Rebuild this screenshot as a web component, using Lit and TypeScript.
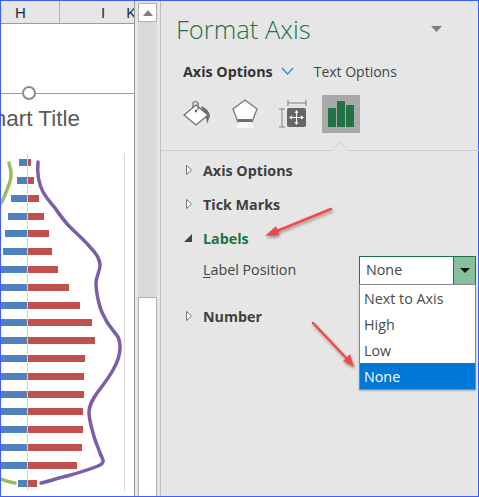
import { LitElement, html, css, svg } from "lit";
import { customElement } from "lit/decorators.js";

const ROWS = [159,177,195,213,230,248,266,284,302,319,337,355,373,391,408,426,444,462,480];
const BLUE = [19,17,11,8,5,3,1,1,1,1,1,1,1,1,1,1,1,1,18];
const RED = [31,34,39,44,49,52,58,69,80,92,95,85,84,84,83,83,82,77,37];

@customElement("app-root")
export class AppRoot extends LitElement {
  static styles = css`
    :host { display: block; width: 479px; height: 497px; position: relative; overflow: hidden; font-family: "Open Sans", "Liberation Sans", sans-serif; }
    * { box-sizing: border-box; }
    .frame { width: 479px; height: 497px; border: 1px solid #3f5cff; display: flex; background: #e6e6e6; }
    .sheet { width: 134px; flex: none; display: flex; flex-direction: column; border-right: 1px solid #9a9a9a; background: #fff; }
    .heads { height: 23px; flex: none; background: #e6e6e6; border-bottom: 1px solid #9a9a9a; display: grid; grid-template-columns: 59px 1fr; font: 15px "Liberation Sans", sans-serif; color: #1c2a48; overflow: hidden; }
    .h { padding: 3px 0 0 14px; border-right: 1px solid #b4b4b4; }
    .ik { display: flex; padding: 3px 0 0 41px; gap: 21px; }
    .handle { height: 70px; flex: none; border-bottom: 1px solid #9a9a9a; position: relative; }
    .dot { position: absolute; left: 21px; top: 62px; width: 14px; height: 14px; border-radius: 50%; border: 2.5px solid #8c8c8c; background: #fff; z-index: 1; }
    .plot { flex: 1; display: block; width: 133px; }
    .scroll { width: 25px; flex: none; display: flex; flex-direction: column; padding: 2px 3px 0; background: #e6e6e6; }
    .up { width: 19px; height: 19px; flex: none; background: #fff; border: 1px solid #b0b0b0; display: grid; place-items: center; }
    .up svg { display: block; }
    .track { flex: 1; background: #d9d9d9; padding-top: 275px; }
    .thumb { height: 100%; background: #fff; border: 1px solid #b0b0b0; border-bottom: none; }
    .gut { width: 1px; background: #bdbdbd; flex: none; }
    .panel { flex: 1; min-width: 0; padding-left: 15px; display: flex; flex-direction: column; position: relative; color: #444; font-size: 14.3px; }
    .title { height: 55px; flex: none; display: flex; align-items: flex-start; justify-content: space-between; padding: 11px 36px 0 0; }
    h1 { margin: 0; font: 300 25.5px/34px "Open Sans", sans-serif; color: #217346; }
    .caret { margin-top: 14px; }
    .tabs { height: 30px; flex: none; display: flex; align-items: center; padding-left: 7px; }
    .tabs b { font-weight: 700; color: #333; }
    .tabs span { font-size: 14px; }
    .chev { margin: 0 20px 0 8px; }
    .icons { display: flex; align-items: center; height: 38px; gap: 10px; padding-left: 2px; margin-top: 9px; flex: none; }
    .ic { width: 38px; height: 38px; display: grid; place-items: center; flex: none; }
    .ic.sel { background: #a9a9a9; }
    .sep { height: 18px; flex: none; display: block; margin-left: -15px; }
    .sections { padding-top: 2px; display: flex; flex-direction: column; flex: 1; }
    .sec { height: 34px; flex: none; display: flex; align-items: center; gap: 11px; padding-left: 10px; font-weight: 700; color: #3f3f3f; }
    .sec svg { width: 6px; flex: none; }
    .sec .open { width: 8px; margin: 0 0 0 -2px; }
    .sec.lab { color: #217346; }
    .row { height: 30px; flex: none; display: flex; align-items: flex-start; justify-content: space-between; padding-left: 27px; margin: 1px 0 13px; }
    .row > span { line-height: 27px; }
    u { text-decoration: underline; text-underline-offset: 2px; }
    .combo { width: 117px; height: 29px; border: 1px solid #217346; background: #fff; display: flex; margin-right: 2px; }
    .combo span { flex: 1; padding-left: 6px; line-height: 26px; }
    .combo i { width: 22px; background: #86bf9b; border-left: 1px solid #217346; display: grid; place-items: center; }
    .menu { position: absolute; left: 198px; top: 283px; width: 117px; height: 106px; background: #fff; border: 1px solid #888; box-shadow: 0 1px 2px #0003; color: #4a4a4a; }
    .menu div { height: 26px; line-height: 27px; padding-left: 4px; }
    .menu .on { background: #0078d7; color: #fff; }
    .arrows { position: absolute; left: 0; top: 0; pointer-events: none; }
  `;

  private plot() {
    return html`<svg class="plot" viewBox="1 94 133 402" preserveAspectRatio="xMinYMin">
      <text x="80" y="126" text-anchor="end" font-family="Liberation Sans" font-size="22.5" fill="#595959">Chart Title</text>
      <line x1="27.5" y1="154" x2="27.5" y2="491" stroke="#cfd3d3"/>
      <line x1="124.5" y1="153" x2="124.5" y2="491" stroke="#d9d9d9"/>
      ${ROWS.map((y, i) => svg`<rect x=${BLUE[i]} y=${y} width=${27 - BLUE[i]} height="7" fill="#4f81bd"/><rect x="28" y=${y} width=${RED[i] - 28} height="7" fill="#c0504d"/>`)}
      <path d="M38 162C37 172 38 182 43 192C47 199 50 202 55 208C60 215 64 221 70 227C77 234 84 240 90 247C96 253 100 259 100 265C100 272 96 276 96 283C96 291 98 300 100 307C102 314 105 318 107 322C110 327 114 331 118 337C120 341 120 344 120 348C120 356 117 363 113 370C108 379 103 385 97 393C93 399 89 405 89 412C89 419 91 426 93 433C95 441 98 447 100 453C101 457 104 459 103 462C102 465 100 465 98 466C88 470 78 473 67 476C58 478 50 481 41 483" fill="none" stroke="#7b5ea7" stroke-width="3.5" stroke-linecap="round"/>
      <path d="M9 163C10 168 11 170 11 173C11 179 10 183 8 187C6 193 4 198 1 203M1 479C6 481 10 482 15 483" fill="none" stroke="#9bbb59" stroke-width="3.5" stroke-linecap="round"/>
    </svg>`;
  }

  render() {
    const closed = html`<svg height="10" viewBox="0 0 6 10"><path d="M.5 .5L5.500 5L.5 9.500Z" fill="#fff" stroke="#777"/></svg>`;
    return html`<div class="frame">
      <div class="sheet">
        <div class="heads"><div class="h">H</div><div class="ik"><span>I</span><span>K</span></div></div>
        <div class="handle"><div class="dot"></div></div>
        ${this.plot()}
      </div>
      <div class="scroll">
        <div class="up"><svg width="10" height="6"><path d="M0 6L5 0L10 6Z" fill="#7f7f7f"/></svg></div>
        <div class="track"><div class="thumb"></div></div>
      </div>
      <div class="gut"></div>
      <div class="panel">
        <div class="title"><h1>Format Axis</h1><svg class="caret" width="11" height="6"><path d="M0 0H11L5.5 6Z" fill="#7f7f7f"/></svg></div>
        <div class="tabs"><b>Axis Options</b>
          <svg class="chev" width="13" height="8" viewBox="0 0 13 8"><path d="M1 1L6.5 7L12 1" fill="none" stroke="#2e8fd6" stroke-width="1.4"/></svg>
          <span>Text Options</span></div>
        <div class="icons">
          <div class="ic"><svg width="30" height="30" viewBox="0 0 30 30">
            <path d="M19 7Q27 10 28 17L25 25Q25 19 21 14Z" fill="#6e6e6e"/>
            <path d="M14 6L26 16L14 26L2 16Z" fill="#fff" stroke="#6e6e6e" stroke-width="1.2"/>
            <path d="M11 9V4Q13.500 1 16 4V11" fill="none" stroke="#6e6e6e" stroke-width="1.2"/><circle cx="14" cy="12" r="1.4" fill="#6e6e6e"/></svg></div>
          <div class="ic"><svg width="30" height="32" viewBox="0 0 30 32">
            <path d="M15 2L27 11L22 24H8L3 11Z" fill="#fff" stroke="#7a7a7a" stroke-width="1.3"/>
            <rect x="8" y="21" width="14" height="3" fill="#6e6e6e"/><path d="M8 24L6 30H24L22 24Z" fill="#f8f8f8"/></svg></div>
          <div class="ic"><svg width="30" height="30" viewBox="0 0 30 30">
            <path d="M10 4H28M10 1V7M28 1V7M1 10H7M1 28H7M4 10V28" fill="none" stroke="#7f7f7f" stroke-width="1"/>
            <rect x="9" y="9" width="19" height="19" rx="2" fill="#666"/>
            <path d="M18.500 12V25M12 18.500H25" stroke="#fff" stroke-width="1"/>
            <path d="M18.500 11L16.500 14H20.500ZM18.500 26L16.500 23H20.500ZM11 18.500L14 16.500V20.500ZM26 18.500L23 16.500V20.500Z" fill="#fff"/></svg></div>
          <div class="ic sel"><svg width="26" height="26" viewBox="0 0 26 26">
            <rect x="0" y="7" width="8" height="19" fill="#217346"/><rect x="9" y="0" width="8" height="26" fill="#217346"/><rect x="18" y="4" width="8" height="22" fill="#217346"/></svg></div>
        </div>
        <svg class="sep" width="318" height="18" viewBox="0 0 318 18"><path d="M0 17.500H171L179 8.500L187 17.500H318" fill="none" stroke="#cfcfcf"/></svg>
        <div class="sections">
          <div class="sec">${closed}Axis Options</div>
          <div class="sec">${closed}Tick Marks</div>
          <div class="sec lab"><svg class="open" height="8" viewBox="0 0 8 8"><path d="M8 0V8H0Z" fill="#444"/></svg>Labels</div>
          <div class="row"><span><u>L</u>abel Position</span><div class="combo"><span>None</span><i><svg width="10" height="5"><path d="M0 0H10L5 5Z" fill="#111"/></svg></i></div></div>
          <div class="sec">${closed}Number</div>
        </div>
        <div class="menu"><div>Next to Axis</div><div>High</div><div>Low</div><div class="on">None</div></div>
      </div>
    </div>
    <svg class="arrows" width="479" height="497" viewBox="0 0 479 497">
      <defs><filter id="s" x="-20%" y="-20%" width="140%" height="140%"><feDropShadow dx="1" dy="2" stdDeviation="1.500" flood-color="#000" flood-opacity=".35"/></filter></defs>
      <g filter="url(#s)" fill="none" stroke="#f04848" stroke-width="2.500" stroke-linecap="round">
        <path d="M331 209L272 233"/><path d="M313 323L349 361"/></g>
      <g filter="url(#s)" fill="#f04848"><path d="M265 236L276 226L279 235Z"/><path d="M354 367L343 361L350 354Z"/></g>
    </svg>`;
  }
}
